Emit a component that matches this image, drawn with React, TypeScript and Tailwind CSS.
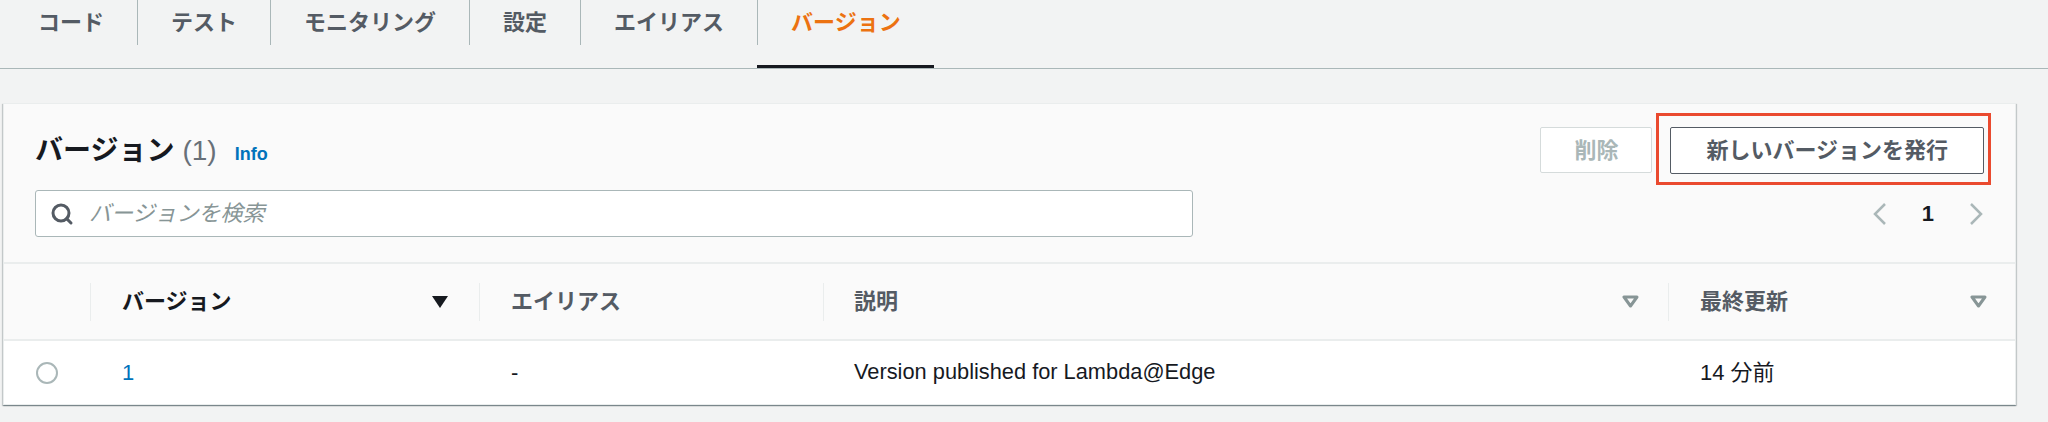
import { Search } from "lucide-react";

const tabs = ["コード", "テスト", "モニタリング", "設定", "エイリアス", "バージョン"];
const activeTab = "バージョン";

function SortDown() {
  return (
    <svg width="16" height="12" viewBox="0 0 16 12">
      <polygon points="0,0 16,0 8,12" fill="#16191f" />
    </svg>
  );
}

function SortNone() {
  return (
    <svg width="17" height="13" viewBox="0 0 17 13">
      <polygon points="2,2 15,2 8.5,11" fill="none" stroke="#879596" strokeWidth="3" strokeLinejoin="round" />
    </svg>
  );
}

function Chevron({ dir }: { dir: "left" | "right" }) {
  return (
    <svg width="14" height="24" viewBox="0 0 14 24">
      <polyline
        points={dir === "left" ? "12,2 2,12 12,22" : "2,2 12,12 2,22"}
        fill="none"
        stroke="#aab7b8"
        strokeWidth="2.5"
      />
    </svg>
  );
}

export default function App() {
  return (
    <div
      className="w-full h-[422px] overflow-hidden bg-[#f2f3f3] text-[#16191f]"
      style={{ fontFamily: '"Liberation Sans", "Noto Sans CJK JP", sans-serif' }}
    >
      {/* タブ */}
      <div className="flex h-[69px] border-b border-[#aab7b8] pl-[5px]">
        {tabs.map((t, i) => (
          <div key={t} className="flex flex-col justify-between h-full">
            <div
              className={
                "h-[45px] flex items-center px-[33px] text-[22px] font-bold " +
                (i > 0 ? "border-l border-[#aab7b8] " : "") +
                (t === activeTab ? "text-[#ec7211]" : "text-[#545b64]")
              }
            >
              {t}
            </div>
            <div className={t === activeTab ? "h-[3px] bg-[#16191f]" : "h-[3px]"} />
          </div>
        ))}
      </div>

      {/* パネル */}
      <div className="mt-[34px] ml-[3px] w-[2013px] border border-[#eaeded] bg-[#fafafa] shadow-[0_1px_1px_0_rgba(0,28,36,0.3),1px_1px_1px_0_rgba(0,28,36,0.15),-1px_1px_1px_0_rgba(0,28,36,0.15)]">
        <div className="pl-[31px] pr-[31px]">
          <div className="flex items-center justify-between pt-[23px]">
            <div className="flex items-baseline">
              <span className="text-[28px] font-bold">バージョン</span>
              <span className="text-[28px] text-[#687078] ml-[8px]">(1)</span>
              <span className="text-[18px] font-bold text-[#0073bb] ml-[18px]">Info</span>
            </div>
            <div className="flex gap-[18px]">
              <button className="h-[46px] px-[33px] border border-[#d5dbdb] rounded-[2px] bg-white text-[22px] font-bold text-[#aab7b8]">
                削除
              </button>
              <button className="relative h-[47px] px-[35px] border border-[#545b64] rounded-[2px] bg-white text-[22px] font-bold text-[#545b64]">
                新しいバージョンを発行
                <span className="absolute -left-[15px] -top-[15px] -right-[8px] -bottom-[12px] border-[3px] border-[#ea4a2f]" />
              </button>
            </div>
          </div>

          <div className="flex items-center justify-between mt-[16px]">
            <div className="w-[1158px] h-[47px] flex items-center border border-[#aab7b8] rounded-[3px] bg-white pl-[14px]">
              <Search size={24} strokeWidth={3} color="#545b64" />
              <span className="ml-[15px] text-[22px] italic text-[#879596]">バージョンを検索</span>
            </div>
            <div className="flex items-center gap-[35px] pr-[1px]">
              <Chevron dir="left" />
              <span className="text-[22px] font-bold">1</span>
              <Chevron dir="right" />
            </div>
          </div>
        </div>

        {/* テーブル */}
        <div className="mt-[25px] border-t-2 border-[#eaeded]">
          <div className="flex h-[75px] items-center text-[22px] font-bold">
            <div className="w-[86px]" />
            <div className="w-[389px] h-[38px] border-l border-[#eaeded] flex items-center justify-between pl-[31px] pr-[31px]">
              <span>バージョン</span>
              <SortDown />
            </div>
            <div className="w-[344px] h-[38px] border-l border-[#eaeded] flex items-center pl-[31px] text-[#545b64]">
              エイリアス
            </div>
            <div className="w-[845px] h-[38px] border-l border-[#eaeded] flex items-center justify-between pl-[30px] pr-[29px] text-[#545b64]">
              <span>説明</span>
              <SortNone />
            </div>
            <div className="flex-1 h-[38px] border-l border-[#eaeded] flex items-center justify-between pl-[31px] pr-[28px] text-[#545b64]">
              <span>最終更新</span>
              <SortNone />
            </div>
          </div>
          <div className="flex h-[65px] items-center border-t-2 border-[#eaeded] bg-white text-[22px]">
            <div className="w-[86px] flex justify-center">
              <div className="w-[22px] h-[22px] rounded-full border-2 border-[#aab7b8] bg-white" />
            </div>
            <div className="w-[389px] pl-[32px] text-[#0073bb]">1</div>
            <div className="w-[344px] pl-[32px]">-</div>
            <div className="w-[845px] pl-[31px] text-[21.8px]">Version published for Lambda@Edge</div>
            <div className="flex-1 pl-[32px]">14 分前</div>
          </div>
        </div>
      </div>
    </div>
  );
}
